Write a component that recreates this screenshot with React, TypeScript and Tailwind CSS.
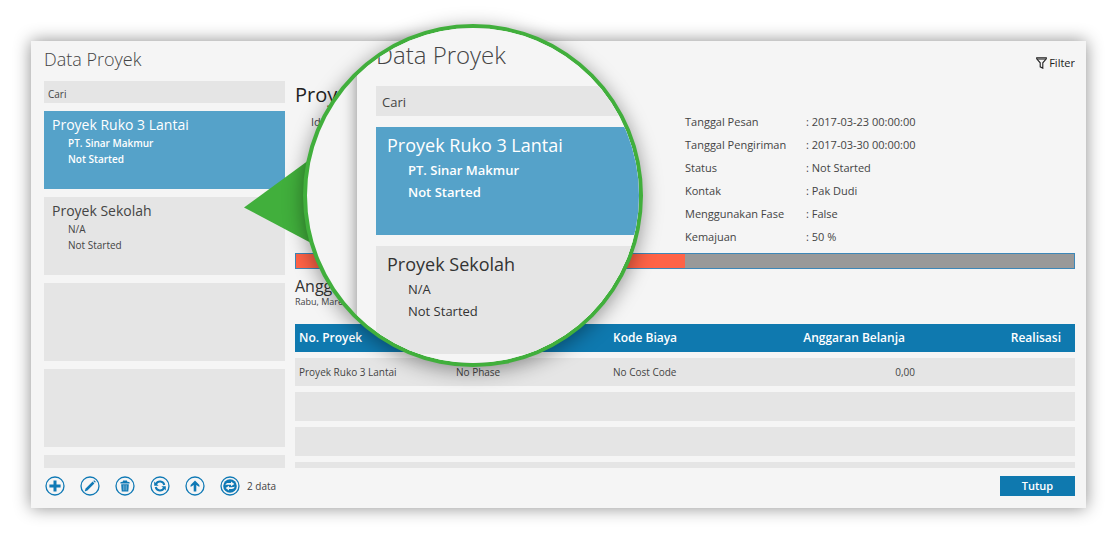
interface Project {
  name: string;
  client: string;
  status: string;
}

const projects: Project[] = [
  { name: 'Proyek Ruko 3 Lantai', client: 'PT. Sinar Makmur', status: 'Not Started' },
  { name: 'Proyek Sekolah', client: 'N/A', status: 'Not Started' },
];

const details = [
  ['Tanggal Pesan', '2017-03-23 00:00:00'],
  ['Tanggal Pengiriman', '2017-03-30 00:00:00'],
  ['Status', 'Not Started'],
  ['Kontak', 'Pak Dudi'],
  ['Menggunakan Fase', 'False'],
  ['Kemajuan', '50 %'],
];

const actions = [
  { label: 'Tambah', icon: <path d="M10 4.4v11.2M4.4 10h11.2" strokeWidth="3" /> },
  {
    label: 'Ubah',
    icon: (
      <>
        <path d="M4.6 15.4 5.6 12.6 12.6 5.6 14.4 7.4 7.4 14.4z" fill="currentColor" stroke="none" />
        <path d="M13.2 5 14.2 4.2 15.8 5.8 15 6.8z" fill="currentColor" stroke="none" />
      </>
    ),
  },
  {
    label: 'Hapus',
    icon: (
      <>
        <path d="M5.4 7.6V6.2L8 5.6V4.6h4v1L14.6 6.2v1.4z" fill="currentColor" stroke="none" />
        <path d="M6.2 8.2h7.6l-.5 7.4H6.7z" fill="currentColor" stroke="none" />
        <path d="M8.4 9.2v5.2M10 9.2v5.2M11.6 9.2v5.2" stroke="#f5f5f5" strokeWidth="0.4" />
      </>
    ),
  },
  {
    label: 'Muat ulang',
    icon: (
      <>
        <path d="M6 8.2A4.4 4.4 0 0 1 14.3 9M14 11.8A4.4 4.4 0 0 1 5.7 11" strokeWidth="2" />
        <path d="M4.2 5.6v4.2h4.4zM15.8 14.4v-4.2h-4.4z" fill="currentColor" stroke="none" />
      </>
    ),
  },
  {
    label: 'Naik',
    icon: <path d="M10 4.6 14.4 9v2L11.3 9v6.4H8.7V9L5.6 11V9z" fill="currentColor" stroke="none" />,
  },
  {
    label: 'Tukar',
    icon: (
      <>
        <circle cx="10" cy="10" r="6.8" fill="currentColor" stroke="none" />
        <path
          d="M5.4 9.4C5.6 7.6 6.8 7 8.4 7H11V5.4L14.4 8 11 10.2V8.8H8C6.8 8.8 6 8.8 5.4 9.4z"
          fill="#f5f5f5"
          stroke="none"
        />
        <path
          d="M14.6 10.6C14.4 12.4 13.2 13 11.6 13H9v1.6L5.6 12 9 9.8v1.4h3c1.2 0 2 0 2.6-.6z"
          fill="#f5f5f5"
          stroke="none"
        />
      </>
    ),
  },
];

function FilterIcon() {
  return (
    <svg width="11" height="12" viewBox="0 0 11 12" fill="none" stroke="currentColor" aria-hidden="true">
      <path d="M0.7 0.9h9.6v1L6.8 5.8v5.4L4.2 9.8v-4L0.7 1.9z" strokeWidth="1.1" />
      <path d="M1.6 2.2h7.8" strokeWidth="0.8" />
    </svg>
  );
}

function ProjectCard({ project, selected }: { project: Project; selected: boolean }) {
  return (
    <button
      type="button"
      className={`h-[78px] w-full shrink-0 px-2 pt-1 text-left flex flex-col ${
        selected ? 'bg-[#55a2c9] text-white font-semibold' : 'bg-[#e5e5e5] text-[#444]'
      }`}
    >
      <span className="text-sm font-normal leading-5">{project.name}</span>
      <span className="pl-4 text-[10px] leading-4">{project.client}</span>
      <span className="pl-4 text-[10px] leading-4">{project.status}</span>
    </button>
  );
}

function LensCard({ project, selected }: { project: Project; selected: boolean }) {
  return (
    <div
      className={`h-[108px] shrink-0 px-[11px] pt-1 flex flex-col ${
        selected ? 'bg-[#55a2c9] text-white font-semibold' : 'bg-[#e5e5e5] text-[#333]'
      }`}
    >
      <span className={`text-lg leading-7 ${selected ? 'font-medium' : 'font-normal'}`}>{project.name}</span>
      <span className="pl-[21px] text-[13px] leading-[22px]">{project.client}</span>
      <span className="pl-[21px] text-[13px] leading-[22px]">{project.status}</span>
    </div>
  );
}

// Magnifier that floats over the window and enlarges the project list
function Lens() {
  return (
    <div className="pointer-events-none absolute left-[212px] top-[-17px] h-[343px] w-[400px]" aria-hidden="true">
      <svg className="absolute left-0 top-[136px]" width="80" height="90" viewBox="0 0 80 90">
        <path d="M1 47.5 66 0 70 84z" fill="#41af3c" />
      </svg>
      <div className="absolute left-[60px] top-0 h-[343px] w-[340px] overflow-hidden rounded-[50%] border-4 border-[#41af3c] bg-[#f5f5f5] shadow-[0_4px_20px_rgba(0,0,0,0.4)]">
        <div className="ml-[50px] flex h-full flex-col bg-[#f5f5f5] pl-[19px] pt-2 shadow-[0_0_14px_rgba(0,0,0,0.45)]">
          <span className="text-2xl font-light leading-[38px] text-[#444]">Data Proyek</span>
          <div className="mb-[11px] mt-3 flex h-[30px] shrink-0 items-center bg-[#e5e5e5] px-[6px] pt-1 text-[13px] text-[#444]">
            Cari
          </div>
          <div className="flex flex-col gap-[11px]">
            {projects.map((p, i) => (
              <LensCard key={p.name} project={p} selected={i === 0} />
            ))}
          </div>
        </div>
      </div>
    </div>
  );
}

export default function App() {
  return (
    <div className="bg-white px-[31px] pb-[29px] pt-[41px] font-['Open_Sans','Noto_Sans',sans-serif]">
      <main className="relative bg-[#f5f5f5] px-[11px] pb-3 pl-[13px] shadow-[0_0_16px_rgba(0,0,0,0.45)]">
        <div className="flex h-[427px] gap-[10px] overflow-hidden">
          <aside className="flex w-[241px] shrink-0 flex-col">
            <h1 className="pt-1 text-lg font-light leading-7 text-[#444]">Data Proyek</h1>
            <input
              type="search"
              aria-label="Cari"
              placeholder="Cari"
              className="mb-2 mt-2 h-[22px] w-full shrink-0 bg-[#e5e5e5] px-1 pt-1 text-[10px] outline-none placeholder:text-[#444]"
            />
            <div className="flex flex-col gap-2">
              {projects.map((p, i) => (
                <ProjectCard key={p.name} project={p} selected={i === 0} />
              ))}
              {[0, 1, 2].map((n) => (
                <div key={n} className="h-[78px] shrink-0 bg-[#e5e5e5]" />
              ))}
            </div>
          </aside>

          <section className="min-w-0 flex-1">
            <div className="flex h-10 justify-end pt-3">
              <button type="button" className="flex h-5 items-center gap-[2px] text-[11px] text-[#222]">
                <FilterIcon />
                Filter
              </button>
            </div>
            <h2 className="text-xl leading-7 text-[#222]">Proyek Ruko 3 Lantai</h2>
            <div className="grid grid-cols-2 pt-px text-[11px] leading-[23px] text-[#444]">
              <div className="pl-4">Id</div>
              <dl>
                {details.map(([label, value]) => (
                  <div key={label} className="flex">
                    <dt className="w-[121px]">{label}</dt>
                    <dd>: {value}</dd>
                  </div>
                ))}
              </dl>
            </div>
            <div
              className="mt-[5px] flex h-4 border border-[#3d87b8] bg-[#999]"
              role="progressbar"
              aria-label="Kemajuan"
              aria-valuenow={50}
            >
              <div className="w-1/2 bg-[#ff6347]" />
            </div>
            <h3 className="mt-[7px] text-base leading-5 text-[#333]">Anggaran</h3>
            <p className="text-[9px] leading-3 text-[#444]">Rabu, Maret 2017</p>

            <table className="mt-4 w-full table-fixed text-left text-[#444]">
              <thead>
                <tr className="h-[31px] bg-[#0f79af] text-xs text-white">
                  <th className="w-[157px] pl-1 font-semibold">No. Proyek</th>
                  <th className="w-[157px] pl-1 font-semibold">Fase</th>
                  <th className="w-[157px] pl-1 font-semibold">Kode Biaya</th>
                  <th className="pr-[14px] text-right font-semibold">Anggaran Belanja</th>
                  <th className="w-[156px] pr-[14px] text-right font-semibold">Realisasi</th>
                </tr>
              </thead>
              <tbody className="text-[10px]">
                <tr className="h-[34px] border-t-[6px] border-[#f5f5f5] bg-[#e5e5e5]">
                  <td className="pl-1">Proyek Ruko 3 Lantai</td>
                  <td className="pl-1">No Phase</td>
                  <td className="pl-1">No Cost Code</td>
                  <td className="pr-1 text-right">0,00</td>
                  <td />
                </tr>
                {[0, 1, 2].map((n) => (
                  <tr key={n} className="h-[35px] border-t-[6px] border-[#f5f5f5] bg-[#e5e5e5]">
                    <td colSpan={5} />
                  </tr>
                ))}
              </tbody>
            </table>
          </section>
        </div>

        <footer className="flex h-7 items-end justify-between">
          <div className="flex items-center gap-[15px] pl-px">
            {actions.map((a) => (
              <button key={a.label} type="button" aria-label={a.label} className="text-[#0f79b5]">
                <svg width="20" height="20" viewBox="0 0 20 20" fill="none" stroke="currentColor">
                  <circle cx="10" cy="10" r="9" strokeWidth="1.3" />
                  {a.icon}
                </svg>
              </button>
            ))}
            <span className="-ml-2 text-[10px] text-[#444]">2 data</span>
          </div>
          <button type="button" className="h-5 w-[75px] bg-[#0f79af] text-[11px] font-semibold text-white">
            Tutup
          </button>
        </footer>
        <Lens />
      </main>
    </div>
  );
}
